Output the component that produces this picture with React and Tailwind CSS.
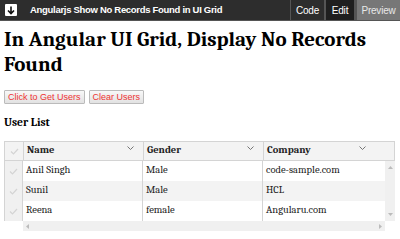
import React from "react";

const Check = () => (
  <svg width="9" height="7" viewBox="0 0 9 7" fill="none">
    <path d="M1 3.5 L3.5 6 L8 1" stroke="#d4d4d4" strokeWidth="1.2" />
  </svg>
);

const Chevron = () => (
  <svg width="7" height="4" viewBox="0 0 7 4" fill="none">
    <path d="M0.5 0.5 L3.5 3.5 L6.5 0.5" stroke="#666" strokeWidth="0.9" />
  </svg>
);

const rows = [
  ["Anil Singh", "Male", "code-sample.com"],
  ["Sunil", "Male", "HCL"],
  ["Reena", "female", "Angularu.com"],
];

export default function App() {
  return (
    <div className="w-[400px] h-[239px] bg-white overflow-hidden">
      <div className="h-[21px] bg-[#2d2d2d] flex items-stretch border-b border-[#555] font-[Liberation_Sans,Arial,sans-serif]">
        <div className="flex items-center pl-[5px] pr-[13px]">
          <div className="w-[12px] h-[12px] bg-white rounded-[1px] flex items-center justify-center">
            <svg width="8" height="9" viewBox="0 0 8 9" fill="none">
              <path d="M4 0.5 V7.5 M1 4.5 L4 7.5 L7 4.5" stroke="#111" strokeWidth="1.6" />
            </svg>
          </div>
        </div>
        <div className="flex-1 flex items-center text-white font-bold text-[9.5px] tracking-[-0.3px]">
          Angularjs Show No Records Found in UI Grid
        </div>
        <div className="flex items-stretch text-[10px] tracking-[-0.2px]">
          <div className="w-[34px] flex items-center justify-center text-white border-l border-[#555] bg-[#2d2d2d]">Code</div>
          <div className="w-[2px] bg-[#555]"></div>
          <div className="w-[28px] flex items-center justify-center text-white bg-[#1f1f1f]">Edit</div>
          <div className="w-[3px] bg-[#555]"></div>
          <div className="w-[43px] flex items-center justify-center text-[#e8e8e8] bg-[#777]">Preview</div>
        </div>
      </div>

      <div className="px-[4px] font-serif">
        <h1 className="text-[21px] font-bold leading-[25px] mt-[6px] text-black">
          In Angular UI Grid, Display No Records<br />Found
        </h1>
        <div className="flex gap-[4px] mt-[13px] font-[Liberation_Sans,Arial,sans-serif]">
          <button className="h-[14px] px-[3px] text-[9px] leading-[12px] text-[#e33] bg-gradient-to-b from-[#f8f8f8] to-[#e2e2e2] border border-[#bbb] rounded-[1px]">
            Click to Get Users
          </button>
          <button className="h-[14px] px-[3px] text-[9px] leading-[12px] text-[#e33] bg-gradient-to-b from-[#f8f8f8] to-[#e2e2e2] border border-[#bbb] rounded-[1px]">
            Clear Users
          </button>
        </div>
        <h3 className="text-[11.5px] font-bold mt-[12px] leading-[14px] text-black">User List</h3>

        <div className="mt-[11px] w-[391px] text-[10.5px] text-[#222]">
          <div className="flex h-[20px] border border-[#d4d4d4] bg-[#f3f3f3] font-bold">
            <div className="w-[19px] flex items-center justify-center border-r border-[#d4d4d4]">
              <Check />
            </div>
            <div className="w-[120px] flex items-center justify-between px-[3px] border-r border-[#d4d4d4]">
              <span>Name</span>
              <span className="mr-[6px] -mt-[6px]"><Chevron /></span>
            </div>
            <div className="w-[120px] flex items-center justify-between px-[3px] border-r border-[#d4d4d4]">
              <span>Gender</span>
              <span className="mr-[6px] -mt-[6px]"><Chevron /></span>
            </div>
            <div className="flex-1 flex items-center justify-between px-[3px]">
              <span>Company</span>
              <span className="mr-[25px] -mt-[6px]"><Chevron /></span>
            </div>
          </div>
          <div className="flex">
            <div className="flex-1">
              {rows.map((r, i) => (
                <div key={i} className={i % 2 === 1 ? "flex h-[20px] bg-[#f3f3f3]" : "flex h-[20px] bg-white"}>
                  <div className="w-[19px] flex items-center justify-center bg-[#f0f0f0] border-l border-r border-[#d4d4d4]">
                    <Check />
                  </div>
                  <div className="w-[120px] flex items-center px-[3px] border-r border-[#d4d4d4]">{r[0]}</div>
                  <div className="w-[120px] flex items-center px-[3px] border-r border-[#d4d4d4]">{r[1]}</div>
                  <div className="flex-1 flex items-center px-[3px]">{r[2]}</div>
                </div>
              ))}
              <div className="flex h-[10px]">
                <div className="w-[19px]"></div>
                <div className="flex-1 bg-[#f0f0f0] flex items-center justify-between px-[3px]">
                  <svg width="3" height="5" viewBox="0 0 3 5"><path d="M3 0 L0 2.5 L3 5 Z" fill="#bbb" /></svg>
                  <svg width="3" height="5" viewBox="0 0 3 5"><path d="M0 0 L3 2.5 L0 5 Z" fill="#bbb" /></svg>
                </div>
              </div>
            </div>
            <div className="w-[10px] h-[60px] bg-[#f0f0f0] flex flex-col items-center justify-between py-[5px]">
              <svg width="5" height="3" viewBox="0 0 5 3"><path d="M0 3 L2.5 0 L5 3 Z" fill="#bbb" /></svg>
              <svg width="5" height="3" viewBox="0 0 5 3"><path d="M0 0 L2.5 3 L5 0 Z" fill="#bbb" /></svg>
            </div>
          </div>
        </div>
      </div>
    </div>
  );
}
